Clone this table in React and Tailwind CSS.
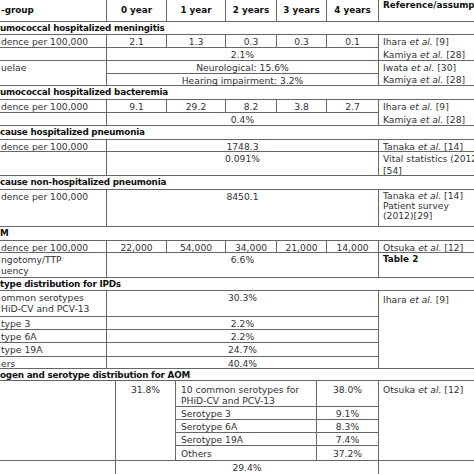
import React from "react";

const first = "border-b border-r border-[#666] pl-px pt-px whitespace-nowrap overflow-hidden";
const num = "border-b border-r border-[#666] pt-px text-center whitespace-nowrap";
const span5 = "col-span-5 border-b border-r border-[#666] pt-px text-center whitespace-nowrap";
const ref = "border-b border-[#666] pl-[4px] pt-px whitespace-nowrap";
const head =
  "col-span-7 border-b border-[#666] pt-px font-bold text-[8.8px] tracking-[-0.2px] text-[#111] whitespace-nowrap";
const th =
  "flex items-center justify-center border-b border-r border-[#666] font-bold text-[8.8px] text-[#111] whitespace-nowrap";

function Ref({ name, n }) {
  return (
    <>
      {name} <i>et al.</i> [{n}]
    </>
  );
}

export default function App() {
  return (
    <div className="h-[474px] w-[474px] overflow-hidden bg-white">
      <div className="grid w-[519px] grid-cols-[107px_60px_59px_51px_50px_52px_140px] grid-rows-[22px_13px_13px_13px_13px_12px_14px_13px_13px_14px_12px_24px_14px_37px_14px_12px_25px_13px_26px_13px_13px_14px_12px_12px_80px_19px] font-['DejaVu_Sans',sans-serif] text-[9.2px] leading-[11px] text-[#333]">
        {/* header */}
        <div className={`${th} justify-start pl-px`}>-group</div>
        <div className={th}>0 year</div>
        <div className={th}>1 year</div>
        <div className={th}>2 years</div>
        <div className={th}>3 years</div>
        <div className={th}>4 years</div>
        <div className="border-b border-[#666] pl-[4px] font-bold text-[8.8px] leading-[10px] text-[#111] whitespace-nowrap">
          Reference/assumptions
        </div>

        {/* meningitis */}
        <div className={head}>umococcal hospitalized meningitis</div>
        <div className={first}>dence per 100,000</div>
        <div className={num}>2.1</div>
        <div className={num}>1.3</div>
        <div className={num}>0.3</div>
        <div className={num}>0.3</div>
        <div className={num}>0.1</div>
        <div className="row-span-2 border-b border-[#666] pl-[4px] whitespace-nowrap">
          <div className="h-[13px] pt-px">
            <Ref name="Ihara" n="9" />
          </div>
          <div className="h-[13px] pt-px">
            <Ref name="Kamiya" n="28" />
          </div>
        </div>
        <div className={first}></div>
        <div className={span5}>2.1%</div>
        <div className={`${first} row-span-2 pt-[3px]`}>uelae</div>
        <div className={span5}>Neurological: 15.6%</div>
        <div className="row-span-2 border-b border-[#666] pl-[4px] whitespace-nowrap">
          <div className="h-[13px] pt-px">
            <Ref name="Iwata" n="30" />
          </div>
          <div className="h-[12px]">
            <Ref name="Kamiya" n="28" />
          </div>
        </div>
        <div className={span5}>Hearing impairment: 3.2%</div>

        {/* bacteremia */}
        <div className={`${head} pt-[2px]`}>umococcal hospitalized bacteremia</div>
        <div className={first}>dence per 100,000</div>
        <div className={num}>9.1</div>
        <div className={num}>29.2</div>
        <div className={num}>8.2</div>
        <div className={num}>3.8</div>
        <div className={num}>2.7</div>
        <div className="row-span-2 border-b border-[#666] pl-[4px] whitespace-nowrap">
          <div className="h-[13px] pt-px">
            <Ref name="Ihara" n="9" />
          </div>
          <div className="h-[13px] pt-px">
            <Ref name="Kamiya" n="28" />
          </div>
        </div>
        <div className={first}></div>
        <div className={span5}>0.4%</div>

        {/* hospitalized pneumonia */}
        <div className={`${head} pt-[2px]`}>cause hospitalized pneumonia</div>
        <div className={first}>dence per 100,000</div>
        <div className={span5}>1748.3</div>
        <div className={ref}>
          <Ref name="Tanaka" n="14" />
        </div>
        <div className={first}></div>
        <div className={`${span5} leading-[12px] pt-0`}>0.091%</div>
        <div className={`${ref} leading-[12px] pt-0`}>
          Vital statistics (2012)
          <br />
          [54]
        </div>

        {/* non-hospitalized pneumonia */}
        <div className={`${head} pt-[2px]`}>cause non-hospitalized pneumonia</div>
        <div className={first}>dence per 100,000</div>
        <div className={`${span5} pt-[2px]`}>8450.1</div>
        <div className={`${ref} leading-[10px] pt-[2px]`}>
          <Ref name="Tanaka" n="14" />
          <br />
          Patient survey
          <br />
          (2012)[29]
        </div>

        {/* AOM */}
        <div className={`${head} pt-[2px]`}>M</div>
        <div className={first}>dence per 100,000</div>
        <div className={num}>22,000</div>
        <div className={num}>54,000</div>
        <div className={num}>34,000</div>
        <div className={num}>21,000</div>
        <div className={num}>14,000</div>
        <div className={ref}>
          <Ref name="Otsuka" n="12" />
        </div>
        <div className={`${first} pt-[2px]`}>
          ngotomy/TTP
          <br />
          uency
        </div>
        <div className={`${span5} pt-[2px]`}>6.6%</div>
        <div className={`${ref} pt-[2px] font-bold text-[8.8px] text-[#111]`}>Table 2</div>

        {/* serotype IPDs */}
        <div className={head}>type distribution for IPDs</div>
        <div className={`${first} pt-[3px]`}>
          ommon serotypes
          <br />
          HiD-CV and PCV-13
        </div>
        <div className={`${span5} pt-[3px]`}>30.3%</div>
        <div className="row-span-5 border-b border-[#666] pl-[4px] pt-[3px] whitespace-nowrap">
          <Ref name="Ihara" n="9" />
        </div>
        <div className={first}>type 3</div>
        <div className={span5}>2.2%</div>
        <div className={first}>type 6A</div>
        <div className={span5}>2.2%</div>
        <div className={first}>type 19A</div>
        <div className={span5}>24.7%</div>
        <div className={first}>ers</div>
        <div className={span5}>40.4%</div>

        {/* pathogen / serotype AOM */}
        <div className={head}>ogen and serotype distribution for AOM</div>
        <div className="col-span-6 grid grid-cols-[116px_60px_141px_62px] grid-rows-[26px_13px_13px_13px_15px]">
          <div className="row-span-5 border-b border-r border-[#666]"></div>
          <div className="row-span-5 border-b border-r border-[#666] pt-[3px] text-center">31.8%</div>
          <div className="border-b border-r border-[#666] pl-[5px] pt-[3px] whitespace-nowrap">
            10 common serotypes for
            <br />
            PHiD-CV and PCV-13
          </div>
          <div className="border-b border-r border-[#666] pt-[3px] text-center">38.0%</div>
          <div className="border-b border-r border-[#666] pl-[5px] pt-px">Serotype 3</div>
          <div className="border-b border-r border-[#666] pt-px text-center">9.1%</div>
          <div className="border-b border-r border-[#666] pl-[5px] pt-px">Serotype 6A</div>
          <div className="border-b border-r border-[#666] pt-px text-center">8.3%</div>
          <div className="border-b border-r border-[#666] pl-[5px] pt-px">Serotype 19A</div>
          <div className="border-b border-r border-[#666] pt-px text-center">7.4%</div>
          <div className="border-b border-r border-[#666] pl-[5px] pt-[2px]">Others</div>
          <div className="border-b border-r border-[#666] pt-[2px] text-center">37.2%</div>
        </div>
        <div className="border-b border-[#666] pl-[4px] pt-[3px] whitespace-nowrap">
          <Ref name="Otsuka" n="12" />
        </div>
        <div className="col-span-6 grid grid-cols-[116px_1fr]">
          <div className="border-r border-[#666]"></div>
          <div className="border-r border-[#666] pt-px text-center">29.4%</div>
        </div>
        <div></div>
      </div>
    </div>
  );
}
